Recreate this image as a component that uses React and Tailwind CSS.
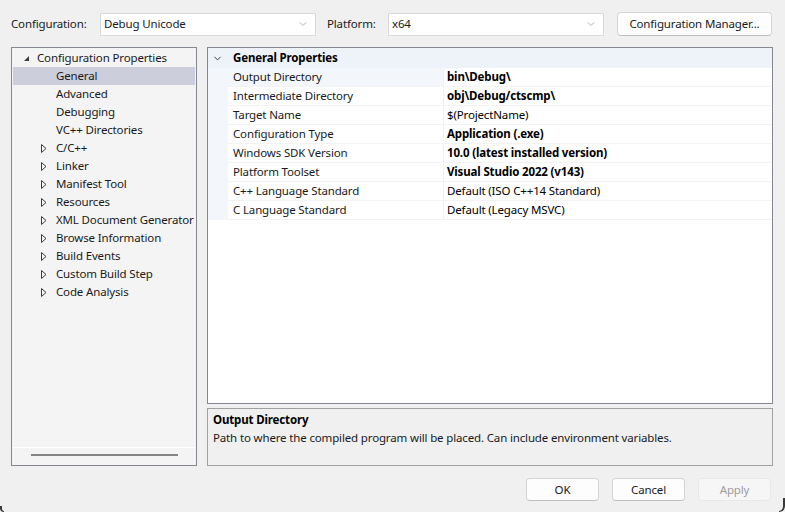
import { ChevronDown } from 'lucide-react';

const treeItems = [
  { label: 'General', selected: true },
  { label: 'Advanced' },
  { label: 'Debugging' },
  { label: 'VC++ Directories' },
  { label: 'C/C++', expandable: true },
  { label: 'Linker', expandable: true },
  { label: 'Manifest Tool', expandable: true },
  { label: 'Resources', expandable: true },
  { label: 'XML Document Generator', expandable: true },
  { label: 'Browse Information', expandable: true },
  { label: 'Build Events', expandable: true },
  { label: 'Custom Build Step', expandable: true },
  { label: 'Code Analysis', expandable: true },
];

const props = [
  { name: 'Output Directory', value: 'bin\\Debug\\', bold: true, selected: true },
  { name: 'Intermediate Directory', value: 'obj\\Debug/ctscmp\\', bold: true },
  { name: 'Target Name', value: '$(ProjectName)' },
  { name: 'Configuration Type', value: 'Application (.exe)', bold: true },
  { name: 'Windows SDK Version', value: '10.0 (latest installed version)', bold: true },
  { name: 'Platform Toolset', value: 'Visual Studio 2022 (v143)', bold: true },
  { name: 'C++ Language Standard', value: 'Default (ISO C++14 Standard)' },
  { name: 'C Language Standard', value: 'Default (Legacy MSVC)' },
];

function Combo({ value }) {
  return (
    <div className="flex items-center w-[216px] h-[23px] bg-white border border-[#d9d9d9] pl-[3px] pr-[6px]">
      <span className="flex-1">{value}</span>
      <ChevronDown size={12} strokeWidth={1.2} className="text-[#808080]" />
    </div>
  );
}

function Arrow({ open }) {
  if (open) {
    return (
      <svg width="7" height="7" viewBox="0 0 7 7" className="shrink-0">
        <path d="M6 1 L6 6 L1 6 Z" fill="#3c3c3c" />
      </svg>
    );
  }
  return (
    <svg width="6" height="9" viewBox="0 0 6 9" className="shrink-0">
      <path d="M0.5 0.5 L5 4.5 L0.5 8.5 Z" fill="none" stroke="#3c3c3c" strokeWidth="1" />
    </svg>
  );
}

function Button({ children, disabled }) {
  return (
    <div
      className={`w-[73px] h-[23px] flex items-center justify-center rounded-[4px] border ${
        disabled
          ? 'bg-[#f6f6f6] border-[#e8e8e8] text-[#9d9d9d]'
          : 'bg-[#fdfdfd] border-[#d5d5d5] border-b-[#c0c0c0] text-[#1a1a1a]'
      }`}
    >
      {children}
    </div>
  );
}

export default function App() {
  return (
    <div
      className="relative w-[785px] h-[512px] overflow-hidden bg-[#f0f0f0] text-[11.5px] tracking-[-0.15px] text-[#1a1a1a] leading-none"
      style={{ fontFamily: '"Noto Sans", "Open Sans", sans-serif' }}
    >
      {/* top bar */}
      <div className="flex items-center pt-[12px] pl-[11px]">
        <span className="w-[89px]">Configuration:</span>
        <Combo value="Debug Unicode" />
        <span className="w-[61px] ml-[11px]">Platform:</span>
        <Combo value="x64" />
        <div className="ml-[13px] w-[155px] h-[24px] flex items-center justify-center rounded-[4px] border border-[#d5d5d5] border-b-[#c0c0c0] bg-[#fdfdfd]">
          Configuration Manager...
        </div>
      </div>

      {/* main area */}
      <div className="flex mt-[11px] ml-[11px]">
        {/* tree */}
        <div className="w-[186px] h-[419px] overflow-hidden border border-[#828790] bg-[#f4f4f4] flex flex-col p-px">
          <div className="flex items-center h-[18px] pl-[10px] gap-[7px]">
            <Arrow open />
            <span>Configuration Properties</span>
          </div>
          {treeItems.map((it) => (
            <div
              key={it.label}
              className={`flex items-center h-[18px] whitespace-nowrap ${it.selected ? 'bg-[#cccedb]' : ''}`}
            >
              <span className="w-[43px] shrink-0 flex justify-end pr-[9px]">
                {it.expandable && <Arrow />}
              </span>
              <span>{it.label}</span>
            </div>
          ))}
          <div className="flex-1" />
          <div className="h-[17px] border-t border-white flex items-center pl-[18px] pb-[2px]">
            <div className="w-[147px] h-[2px] bg-[#858585]" />
          </div>
        </div>

        {/* right column */}
        <div className="ml-[10px] w-[566px] flex flex-col gap-[4px]">
          <div className="h-[357px] border border-[#828790] bg-white flex flex-col">
            <div className="flex items-center h-[20px] bg-[#eef2f9]">
              <span className="w-[25px] flex pl-[4px]">
                <ChevronDown size={11} strokeWidth={2} className="text-[#2a2a2a]" />
              </span>
              <span className="font-bold text-black">General Properties</span>
            </div>
            <div className="flex">
              <div className="w-[20px] bg-[#f3f6fb]" />
              <div className="flex-1 flex flex-col">
                {props.map((p) => (
                  <div key={p.name} className="flex h-[19px] border-b border-[#f3f3f3]">
                    <div className={`w-[215px] flex items-center pl-[5px] ${p.selected ? 'bg-[#f3f6fb]' : ''}`}>
                      {p.name}
                    </div>
                    <div className={`flex-1 flex items-center pl-[3px] border-l border-[#f0f0f0] text-black ${p.bold ? 'font-bold' : ''}`}>
                      {p.value}
                    </div>
                  </div>
                ))}
              </div>
            </div>
          </div>
          <div className="h-[58px] border border-[#a0a0a0] bg-[#f0f0f0] px-[5px] pt-[5px] flex flex-col gap-[6px]">
            <span className="font-bold text-black">Output Directory</span>
            <span>Path to where the compiled program will be placed. Can include environment variables.</span>
          </div>
        </div>
      </div>

      {/* buttons */}
      <div className="flex justify-end gap-[13px] mt-[12px] pr-[14px]">
        <Button>OK</Button>
        <Button>Cancel</Button>
        <Button disabled>Apply</Button>
      </div>

      {/* window corners */}
      <div className="absolute right-0 bottom-0 w-[6px] h-[14px] border-r-2 border-b border-[#3a3a3a] rounded-br-[6px]" />
      <div className="absolute left-0 bottom-0 w-[4px] h-[6px] border-l-2 border-b border-[#3a3a3a] rounded-bl-[4px]" />
    </div>
  );
}
